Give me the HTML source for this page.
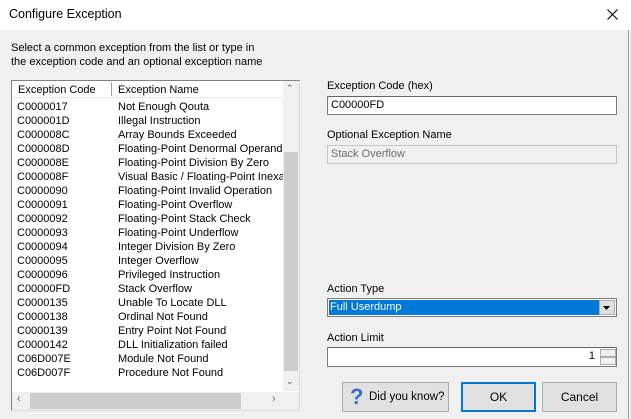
<!DOCTYPE html><html><head><style>
*{margin:0;padding:0;box-sizing:border-box}
body{width:631px;height:419px;background:#f0f0f0;font-family:"Liberation Sans",sans-serif;font-size:11px;color:#000;position:relative;overflow:hidden}
.a{position:absolute;white-space:nowrap}
.title{left:0;top:0;width:631px;height:30px;background:#fff}
.in{position:absolute;background:#fff;border:1px solid #7a7a7a;border-top-color:#646464;padding:2px 3px;line-height:13px}
.btn{position:absolute;background:#e1e1e1;border:1px solid #adadad;text-align:center;font-size:12px}
.row{position:absolute;left:17px;height:14px;line-height:14px;white-space:nowrap}
</style></head><body>
<div class="a title"></div>
<div class="a" style="left:9px;top:7px;font-size:12.5px">Configure Exception</div>
<svg class="a" style="left:607px;top:9px" width="11" height="11"><path d="M0.5 0.5L10.5 10.5M10.5 0.5L0.5 10.5" stroke="#000" stroke-width="1.1"/></svg>
<div class="a" style="left:628px;top:30px;width:1px;height:389px;background:#a0a0a0"></div>
<div class="a" style="left:11px;top:41px;line-height:14px">Select a common exception from the list or type in<br>the exception code and an optional exception name</div>
<div class="a" style="left:11px;top:80px;width:289px;height:331px;background:#fff;border:1px solid #828282;border-right-color:#ddd;border-bottom-color:#ddd"></div>
<div id="rows"></div>
<div class="a" style="left:12px;top:81px;width:271px;height:17px;background:#fff;border-bottom:1px solid #e5e5e5"></div>
<div class="a" style="left:111px;top:82px;width:2px;height:14px;border-left:1px solid #a0a0a0;border-right:1px solid #fff"></div>
<div class="a" style="left:18px;top:84px">Exception Code</div>
<div class="a" style="left:118px;top:84px">Exception Name</div>
<div class="a" style="left:283px;top:81px;width:16px;height:310px;background:#f0f0f0"></div>
<div class="a" style="left:284px;top:152px;width:14px;height:219px;background:#cdcdcd"></div>
<div class="a" style="left:286px;top:83px;font-size:9px;color:#606060">⌃</div>
<div class="a" style="left:286px;top:376px;font-size:9px;color:#606060">⌄</div>
<div class="a" style="left:12px;top:392px;width:287px;height:18px;background:#f0f0f0"></div>
<div class="a" style="left:30px;top:393px;width:211px;height:16px;background:#cdcdcd"></div>
<div class="a" style="left:17px;top:393px;font-size:11px;color:#606060">‹</div>
<div class="a" style="left:272px;top:393px;font-size:11px;color:#606060">›</div>
<div class="a" style="left:327px;top:80px">Exception Code (hex)</div>
<div class="in" style="left:327px;top:96px;width:290px;height:19px">C00000FD</div>
<div class="a" style="left:327px;top:129px">Optional Exception Name</div>
<div class="in" style="left:327px;top:145px;width:290px;height:19px;background:#f0f0f0;color:#6d6d6d;border-color:#c5c5c5">Stack Overflow</div>
<div class="a" style="left:327px;top:283px">Action Type</div>
<div class="a" style="left:327px;top:298px;width:290px;height:19px;border:1px solid #7a7a7a;background:#fff"></div>
<div class="a" style="left:329px;top:300px;width:270px;height:15px;background:#0078d7;color:#fff;padding:1px 1px;line-height:13px">Full Userdump</div>
<div class="a" style="left:599px;top:300px;width:16px;height:15px;background:#e1e1e1;border:1px solid #adadad"></div>
<svg class="a" style="left:603px;top:306px" width="8" height="4"><path d="M0 0H7L3.5 4Z" fill="#000"/></svg>
<div class="a" style="left:327px;top:332px">Action Limit</div>
<div class="in" style="left:327px;top:347px;width:290px;height:20px;text-align:right;padding-right:21px">1</div>
<div class="a" style="left:600px;top:349px;width:16px;height:8px;background:#f0f0f0;border:1px solid #adadad"></div>
<div class="a" style="left:600px;top:357px;width:16px;height:8px;background:#f0f0f0;border:1px solid #adadad"></div>
<div class="btn" style="left:342px;top:382px;width:107px;height:30px"></div>
<div class="a" style="left:350px;top:384px;font-size:22px;font-weight:bold;color:#3a6cc9">?</div>
<div class="a" style="left:369px;top:391px;font-size:11.5px">Did you know?</div>
<div class="btn" style="left:461px;top:382px;width:75px;height:30px;border:2px solid #0078d7;line-height:26px">OK</div>
<div class="btn" style="left:542px;top:382px;width:75px;height:30px;line-height:28px">Cancel</div>
<script>
var d=[["C0000017","Not Enough Qouta"],["C000001D","Illegal Instruction"],["C000008C","Array Bounds Exceeded"],["C000008D","Floating-Point Denormal Operand"],["C000008E","Floating-Point Division By Zero"],["C000008F","Visual Basic / Floating-Point Inexac"],["C0000090","Floating-Point Invalid Operation"],["C0000091","Floating-Point Overflow"],["C0000092","Floating-Point Stack Check"],["C0000093","Floating-Point Underflow"],["C0000094","Integer Division By Zero"],["C0000095","Integer Overflow"],["C0000096","Privileged Instruction"],["C00000FD","Stack Overflow"],["C0000135","Unable To Locate DLL"],["C0000138","Ordinal Not Found"],["C0000139","Entry Point Not Found"],["C0000142","DLL Initialization failed"],["C06D007E","Module Not Found"],["C06D007F","Procedure Not Found"]];
var h="";d.forEach(function(r,i){var t=100+i*14;h+='<div class="row" style="top:'+t+'px">'+r[0]+'</div><div class="row" style="left:118px;top:'+t+'px;width:165px;overflow:hidden">'+r[1]+'</div>';});
document.getElementById("rows").innerHTML=h;
</script>
</body></html>
